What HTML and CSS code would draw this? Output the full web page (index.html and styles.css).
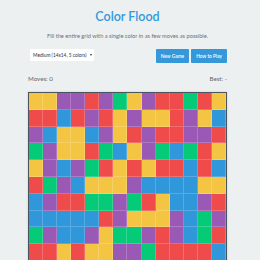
FILE: index.html
```html
<!DOCTYPE html>
<html lang="en">
<head>
  <meta charset="UTF-8" />
  <meta name="viewport" content="width=device-width, initial-scale=1.0" />
  <title>Color Flood</title>
  <link rel="stylesheet" href="styles.css">
</head>
<body>
  <div class="container">
    <h1>Color Flood</h1>
    <p class="subtitle">Fill the entire grid with a single color in as few moves as possible.</p>

    <div class="controls">
      <div class="select-wrap">
        <select id="difficulty">
          <option value="easy">Easy (10x10, 4 colors)</option>
          <option value="medium" selected>Medium (14x14, 5 colors)</option>
          <option value="hard">Hard (18x18, 6 colors)</option>
        </select>
      </div>
      <div class="buttons">
        <button id="newGame" class="btn">New Game</button>
        <button id="howTo" class="btn">How to Play</button>
      </div>
    </div>

    <div class="stats">
      <span>Moves: <span id="moves">0</span></span>
      <span>Best: <span id="best">-</span></span>
    </div>

    <!-- 14x14 board, filled in below -->
    <div id="board" class="board"></div>
  </div>

  <script>
    document.addEventListener("DOMContentLoaded", function(){
      const board = document.getElementById("board");
      const colors = { Y: "yellow", R: "red", P: "purple", G: "green", B: "blue" };

      // Starting layout (one letter per cell)
      const rows = [
        "YYPPRPGYPRRGRY",
        "RRBRPRYPYYRPYB",
        "PBYYBPYRPRRPPR",
        "GPYYRGBYPGBGRY",
        "YPBPGRYRYRRBRB",
        "RGPBYYYPBBBBYY",
        "BPRRGGPGRYBBPR",
        "BBBBBRPYYYPBGP",
        "GPBBPYGGPRPBGR",
        "RRYRYYPPGRRRRB",
        "PGYRBBRYGPYRBG",
        "YRGPYBBRPYGRYP",
        "BYRGPRYBGYPBRY",
        "RPGYBYPRYBGPYR"
      ];

      rows.forEach(row => {
        row.split("").forEach(letter => {
          const cell = document.createElement("div");
          cell.className = "cell " + colors[letter];
          board.appendChild(cell);
        });
      });
    });
  </script>
</body>
</html>
```

FILE: styles.css
```css
/* Global Styles */
body {
  margin: 0 5px 0 0;
  padding: 0;
  font-family: "Lato", "Noto Sans", sans-serif;
  background: #ecf0f1;
  color: #555;
}
.container {
  width: 199px;
  margin: 0 auto;
  padding-bottom: 10px;
}
h1 {
  margin: 10px 0 0;
  font-size: 12.5px;
  line-height: 14px;
  font-weight: 600;
  color: #3498db;
  text-align: center;
}
.subtitle {
  margin: 8px 0 0;
  font-size: 5.7px;
  line-height: 7px;
  color: #687475;
  text-align: center;
}
/* Difficulty + buttons */
.controls {
  display: flex;
  justify-content: space-between;
  align-items: flex-start;
  margin-top: 10px;
}
.select-wrap {
  position: relative;
  margin-left: 2px;
}
.select-wrap::after {
  content: "";
  position: absolute;
  right: 2px;
  top: 5px;
  border-left: 1.5px solid transparent;
  border-right: 1.5px solid transparent;
  border-top: 2px solid #333;
}
select {
  display: block;
  appearance: none;
  -webkit-appearance: none;
  width: 64px;
  height: 12px;
  padding: 0 0 0 3px;
  font-family: inherit;
  font-size: 4.8px;
  color: #333;
  background: #fff;
  border: none;
  border-radius: 1px;
  outline: none;
}
.buttons {
  display: flex;
  gap: 2px;
}
.btn {
  height: 14px;
  padding: 0 5px;
  font-family: inherit;
  font-size: 4.8px;
  font-weight: 600;
  color: #fff;
  background: #3498db;
  border: none;
  border-radius: 1px;
  cursor: pointer;
}
.btn:hover {
  background: #2980b9;
}
/* Moves / best */
.stats {
  display: flex;
  justify-content: space-between;
  margin-top: 12px;
  font-size: 6.2px;
  line-height: 8px;
  color: #666;
}
/* Board */
.board {
  display: grid;
  grid-template-columns: repeat(14, 1fr);
  grid-auto-rows: 16.8px;
  margin-top: 9px;
  border: 1px solid #4a5560;
  box-shadow: 0 0 2px rgba(0, 0, 0, 0.15);
}
.cell {
  border-right: 1px solid rgba(255, 255, 255, 0.2);
  border-bottom: 1px solid rgba(255, 255, 255, 0.2);
}
.yellow { background: #f4c542; }
.red    { background: #ef4b4b; }
.purple { background: #9b59b6; }
.green  { background: #05cb78; }
.blue   { background: #2f97da; }
```
